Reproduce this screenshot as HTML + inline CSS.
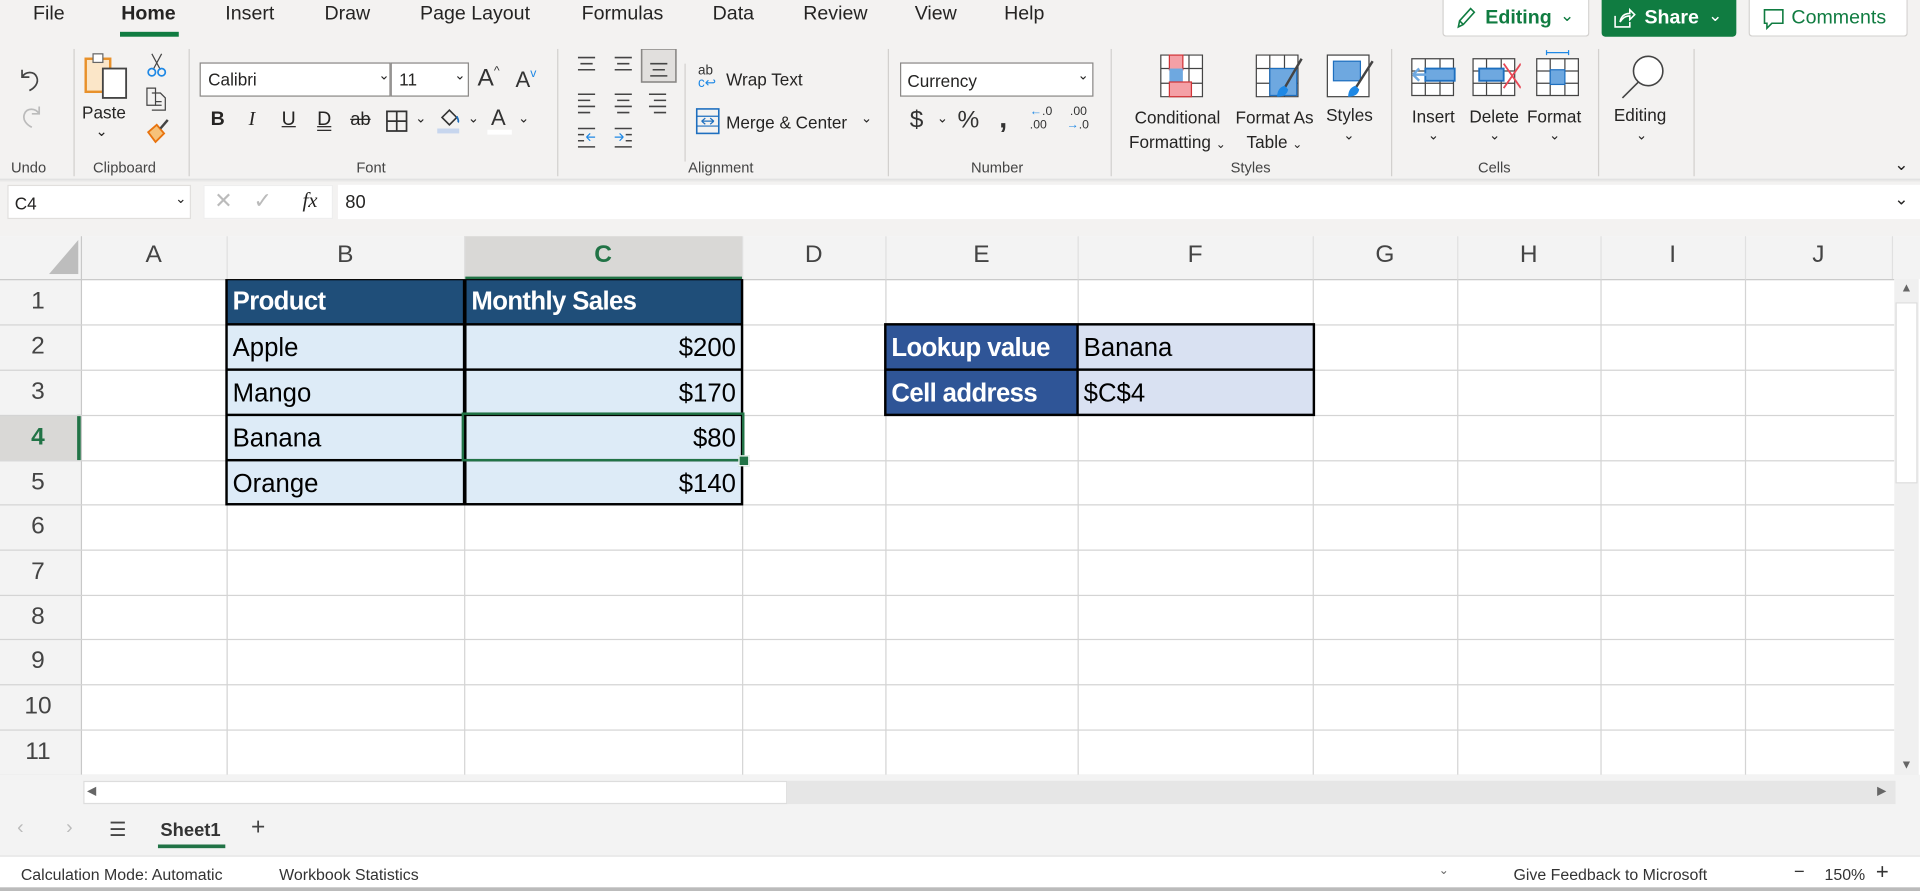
<!DOCTYPE html>
<html><head><meta charset="utf-8">
<style>
html,body{margin:0;padding:0;width:1920px;height:891px;overflow:hidden;background:#fff;}
#w{position:absolute;left:0;top:0;width:1568px;height:728px;transform:scale(1.22449,1.2239);transform-origin:0 0;font-family:"Liberation Sans",sans-serif;color:#252423;background:#f3f2f1;}
.a{position:absolute;white-space:nowrap;}
.tab{font-size:16px;top:3px;color:#252423}
.lbl{font-size:12px;top:130px;color:#444}
.sep{position:absolute;top:40px;width:1px;height:104px;background:#d2d0ce}
.rb{font-size:14px;color:#252423}
.hl{position:absolute;height:1px;background:#d4d4d4;left:66px;width:1481px}
.vl{position:absolute;width:1px;background:#d4d4d4;top:228px;height:405px}
.ch{font-size:20px;color:#444;top:197px;text-align:center}
.rh{font-size:20px;color:#444;left:0;width:62px;text-align:center}
.c{position:absolute;font-family:"Liberation Sans",sans-serif;font-size:21px;color:#000;box-sizing:border-box;padding:0 4px;line-height:37px;height:37px;white-space:nowrap}
.ic{position:absolute}
</style></head><body><div id="w">
<!-- tabs -->
<div class="a tab" style="left:27px">File</div>
<div class="a tab" style="left:99px;font-weight:bold;color:#252423">Home</div>
<div class="a" style="left:98px;top:26px;width:48px;height:4px;background:#107c41"></div>
<div class="a tab" style="left:184px">Insert</div>
<div class="a tab" style="left:265px">Draw</div>
<div class="a tab" style="left:343px">Page Layout</div>
<div class="a tab" style="left:475px">Formulas</div>
<div class="a tab" style="left:582px">Data</div>
<div class="a tab" style="left:656px">Review</div>
<div class="a tab" style="left:747px">View</div>
<div class="a tab" style="left:820px">Help</div>
<!-- right buttons -->
<div class="a" style="left:1178px;top:0;width:120px;height:30px;background:#fff;border:1px solid #d2d0ce;border-top:none;box-sizing:border-box;border-radius:0 0 3px 3px"></div>
<svg class="ic" style="left:1188px;top:5px" width="18" height="20" viewBox="0 0 18 20"><path d="M3 17 L4 12 L13 2 L16 5 L7 15 Z M4 12 L7 15" fill="none" stroke="#107c41" stroke-width="1.3"/></svg>
<div class="a" style="left:1213px;top:6px;font-size:16px;font-weight:bold;color:#107c41">Editing</div>
<div class="a" style="left:1274px;top:4px;font-size:14px;color:#107c41">⌄</div>
<div class="a" style="left:1308px;top:0;width:110px;height:30px;background:#107c41;border-radius:0 0 3px 3px"></div>
<svg class="ic" style="left:1316px;top:5px" width="20" height="20" viewBox="0 0 20 20"><path d="M3 8 V17 H15 V13 M7 13 C8 8 11 6 15 6 V3 L19 7 L15 11 V8 C11 8 9 10 7 13" fill="none" stroke="#fff" stroke-width="1.3"/></svg>
<div class="a" style="left:1343px;top:6px;font-size:16px;font-weight:bold;color:#fff">Share</div>
<div class="a" style="left:1395px;top:4px;font-size:14px;color:#fff">⌄</div>
<div class="a" style="left:1428px;top:0;width:130px;height:30px;background:#fff;border:1px solid #d2d0ce;border-top:none;box-sizing:border-box;border-radius:0 0 3px 3px"></div>
<svg class="ic" style="left:1440px;top:7px" width="18" height="18" viewBox="0 0 18 18"><path d="M1 1 H16 V12 H7 L3 16 V12 H1 Z" fill="none" stroke="#107c41" stroke-width="1.3"/></svg>
<div class="a" style="left:1463px;top:6px;font-size:16px;color:#107c41">Comments</div>
<!-- ribbon -->
<svg class="ic" style="left:14px;top:54px" width="22" height="22" viewBox="0 0 22 22"><path d="M4 3 V9 H10 M4 9 C7 4 14 4 16 9 C18 14 14 18 10 20" fill="none" stroke="#444" stroke-width="1.4"/></svg>
<svg class="ic" style="left:14px;top:84px" width="22" height="22" viewBox="0 0 22 22"><path d="M18 3 V9 H12 M18 9 C15 4 8 4 6 9 C4 14 8 18 12 20" fill="none" stroke="#bbb" stroke-width="1.4"/></svg>
<div class="a lbl" style="left:9px">Undo</div>
<div class="sep" style="left:60px"></div>
<svg class="ic" style="left:68px;top:42px" width="40" height="40" viewBox="0 0 40 40"><rect x="2" y="6" width="20" height="27" fill="#fbe6c8" stroke="#e8912b" stroke-width="2"/><rect x="8" y="2" width="8" height="7" fill="#fff" stroke="#666"/><rect x="16" y="14" width="19" height="24" fill="#fff" stroke="#444" stroke-width="1.5"/></svg>
<div class="a rb" style="left:67px;top:84px">Paste</div>
<div class="a" style="left:78px;top:100px;font-size:12px">⌄</div>
<svg class="ic" style="left:118px;top:42px" width="20" height="22" viewBox="0 0 20 22"><path d="M6 2 L13 15 M14 2 L7 15" stroke="#444" fill="none"/><circle cx="6" cy="17" r="3" fill="none" stroke="#1e88e5" stroke-width="1.4"/><circle cx="14" cy="17" r="3" fill="none" stroke="#1e88e5" stroke-width="1.4"/></svg>
<svg class="ic" style="left:118px;top:70px" width="20" height="22" viewBox="0 0 20 22"><path d="M2 2 H9 V16 H2 Z M6 6 H13 L17 10 V20 H6" fill="#f3f2f1" stroke="#444"/><path d="M9 13 H14 M9 16 H14" stroke="#444"/></svg>
<svg class="ic" style="left:118px;top:96px" width="22" height="22" viewBox="0 0 22 22"><path d="M3 12 L10 6 L16 13 L9 20 Z" fill="#f6c27a" stroke="#e8730e" stroke-width="1.5"/><path d="M13 9 L19 2" stroke="#444" stroke-width="2"/></svg>
<div class="a lbl" style="left:76px">Clipboard</div>
<div class="sep" style="left:154px"></div>
<div class="a" style="left:163px;top:51px;width:156px;height:28px;background:#fff;border:1px solid #8a8886;box-sizing:border-box"></div>
<div class="a rb" style="left:170px;top:57px">Calibri</div>
<div class="a" style="left:309px;top:55px;font-size:11px">⌄</div>
<div class="a" style="left:319px;top:51px;width:64px;height:28px;background:#fff;border:1px solid #8a8886;box-sizing:border-box"></div>
<div class="a rb" style="left:326px;top:57px">11</div>
<div class="a" style="left:371px;top:55px;font-size:11px">⌄</div>
<div class="a" style="left:390px;top:53px;font-size:20px;color:#333">A<span style="font-size:10px;vertical-align:top">^</span></div>
<div class="a" style="left:421px;top:55px;font-size:18px;color:#333">A<span style="font-size:10px;vertical-align:top;color:#1e88e5">v</span></div>
<div class="a" style="left:172px;top:89px;font-size:16px;font-weight:bold">B</div>
<div class="a" style="left:203px;top:89px;font-size:16px;font-style:italic;font-family:'Liberation Serif'">I</div>
<div class="a" style="left:230px;top:89px;font-size:16px;text-decoration:underline">U</div>
<div class="a" style="left:259px;top:89px;font-size:16px;text-decoration:underline double">D</div>
<div class="a" style="left:286px;top:89px;font-size:15px;text-decoration:line-through">ab</div>
<svg class="ic" style="left:315px;top:90px" width="18" height="18" viewBox="0 0 18 18"><path d="M1 1 H17 V17 H1 Z M9 1 V17 M1 9 H17" fill="none" stroke="#333" stroke-width="1.4"/></svg>
<div class="a" style="left:339px;top:90px;font-size:11px">⌄</div>
<svg class="ic" style="left:357px;top:86px" width="22" height="24" viewBox="0 0 22 24"><path d="M4 10 L10 4 L16 10 L10 16 Z" fill="none" stroke="#333" stroke-width="1.3"/><path d="M16 9 Q18 13 17 14" stroke="#1e6fbf" fill="none" stroke-width="1.5"/><rect x="0" y="19" width="18" height="4" fill="#c7d6ee"/></svg>
<div class="a" style="left:382px;top:90px;font-size:11px">⌄</div>
<div class="a" style="left:401px;top:86px;font-size:18px;color:#333">A</div>
<div class="a" style="left:398px;top:106px;width:20px;height:4px;background:#fff"></div>
<div class="a" style="left:423px;top:90px;font-size:11px">⌄</div>
<div class="a lbl" style="left:291px">Font</div>
<div class="sep" style="left:455px"></div>
<svg class="ic" style="left:466px;top:40px" width="90" height="86" viewBox="0 0 90 86"><g stroke="#444" stroke-width="1.3"><path d="M6 7 H20 M8 12 H18 M6 17 H20"/><path d="M36 7 H50 M38 12 H48 M36 17 H50"/><rect x="58" y="0" width="28" height="27" fill="#e1dfdd" stroke="#8a8886"/><path d="M65 12 H79 M67 17 H77 M65 22 H79"/><path d="M6 37 H20 M6 42 H16 M6 47 H20 M6 52 H16"/><path d="M36 37 H50 M38 42 H48 M36 47 H50 M38 52 H48"/><path d="M64 37 H78 M68 42 H78 M64 47 H78 M68 52 H78"/><path d="M6 65 H20 M6 70 H11 M6 75 H11 M6 80 H20"/><path d="M36 65 H50 M45 70 H50 M45 75 H50 M36 80 H50"/></g><path d="M13 72 H20 M13 72 L16 69 M13 72 L16 75" stroke="#1e88e5" fill="none"/><path d="M36 72 H43 M43 72 L40 69 M43 72 L40 75" stroke="#1e88e5" fill="none"/></svg>
<div class="sep" style="left:559px;top:52px;height:80px"></div>
<div class="a" style="left:570px;top:53px;font-size:11px;line-height:10px;color:#333">ab<br><span style="color:#1e88e5">c↩</span></div>
<div class="a rb" style="left:593px;top:57px">Wrap Text</div>
<svg class="ic" style="left:568px;top:88px" width="20" height="22" viewBox="0 0 20 22"><rect x="1" y="1" width="18" height="20" fill="none" stroke="#1e6fbf" stroke-width="1.3"/><path d="M1 7 H19 M1 15 H19 M5 11 H15 M5 11 L8 8.5 M5 11 L8 13.5 M15 11 L12 8.5 M15 11 L12 13.5" stroke="#1e6fbf" fill="none"/></svg>
<div class="a rb" style="left:593px;top:92px">Merge &amp; Center</div>
<div class="a" style="left:703px;top:90px;font-size:11px">⌄</div>
<div class="a lbl" style="left:562px">Alignment</div>
<div class="sep" style="left:725px"></div>
<div class="a" style="left:735px;top:51px;width:158px;height:28px;background:#fff;border:1px solid #8a8886;box-sizing:border-box"></div>
<div class="a rb" style="left:741px;top:58px">Currency</div>
<div class="a" style="left:880px;top:55px;font-size:11px">⌄</div>
<div class="a" style="left:743px;top:87px;font-size:20px;color:#333">$</div>
<div class="a" style="left:765px;top:90px;font-size:11px">⌄</div>
<div class="a" style="left:782px;top:87px;font-size:20px;color:#333">%</div>
<div class="a" style="left:816px;top:83px;font-size:24px;font-weight:bold;color:#333">,</div>
<div class="a" style="left:841px;top:86px;font-size:10px;line-height:11px;color:#333"><span style="color:#1e88e5">←</span>.0<br>.00</div>
<div class="a" style="left:871px;top:86px;font-size:10px;line-height:11px;color:#333">&nbsp;.00<br><span style="color:#1e88e5">→</span>.0</div>
<div class="a lbl" style="left:793px">Number</div>
<div class="sep" style="left:907px"></div>
<svg class="ic" style="left:947px;top:44px" width="36" height="36" viewBox="0 0 36 36"><path d="M1 1 H35 V35 H1 Z M12 1 V35 M24 1 V35 M1 12 H35 M1 24 H35" fill="#fff" stroke="#444"/><rect x="8" y="1" width="11" height="12" fill="#f4a0a6" stroke="#d13438"/><rect x="8" y="12" width="11" height="11" fill="#6ea8e0"/><rect x="8" y="23" width="18" height="12" fill="#f4a0a6" stroke="#d13438"/></svg>
<div class="a rb" style="left:922px;top:86px;text-align:center;line-height:20px">Conditional<br>Formatting <span style="font-size:10px">⌄</span></div>
<svg class="ic" style="left:1025px;top:44px" width="40" height="38" viewBox="0 0 40 38"><path d="M1 1 H35 V35 H1 Z M12 1 V35 M24 1 V35 M1 12 H35 M1 24 H35" fill="#fff" stroke="#444"/><rect x="12" y="12" width="22" height="22" fill="#6ea8e0" stroke="#1e6fbf"/><path d="M38 4 L24 28" stroke="#444" stroke-width="2"/><path d="M24 26 Q18 28 18 35 Q26 35 27 29 Z" fill="#1e88e5"/></svg>
<div class="a rb" style="left:1009px;top:86px;text-align:center;line-height:20px">Format As<br>Table <span style="font-size:10px">⌄</span></div>
<svg class="ic" style="left:1083px;top:44px" width="40" height="38" viewBox="0 0 40 38"><rect x="1" y="1" width="34" height="34" fill="#fff" stroke="#444"/><rect x="6" y="6" width="22" height="16" fill="#6ea8e0" stroke="#1e6fbf"/><path d="M38 6 L24 28" stroke="#444" stroke-width="2"/><path d="M24 26 Q18 28 18 35 Q26 35 27 29 Z" fill="#1e88e5"/></svg>
<div class="a rb" style="left:1083px;top:86px">Styles</div>
<div class="a" style="left:1097px;top:104px;font-size:11px">⌄</div>
<div class="a lbl" style="left:1005px">Styles</div>
<div class="sep" style="left:1136px"></div>
<svg class="ic" style="left:1152px;top:44px" width="40" height="36" viewBox="0 0 40 36"><path d="M1 4 H35 V34 H1 Z M12 4 V34 M24 4 V34 M1 14 H35 M1 24 H35" fill="#fff" stroke="#444"/><rect x="12" y="12" width="24" height="10" fill="#6ea8e0" stroke="#1e6fbf" stroke-width="1.5"/><path d="M14 17 H2 M2 17 L7 12 M2 17 L7 22" stroke="#6ea8e0" stroke-width="2" fill="none"/></svg>
<div class="a rb" style="left:1153px;top:87px">Insert</div>
<div class="a" style="left:1166px;top:104px;font-size:11px">⌄</div>
<svg class="ic" style="left:1202px;top:44px" width="40" height="36" viewBox="0 0 40 36"><path d="M1 4 H35 V34 H1 Z M12 4 V34 M24 4 V34 M1 14 H35 M1 24 H35" fill="#fff" stroke="#444"/><rect x="6" y="12" width="20" height="10" fill="#6ea8e0" stroke="#1e6fbf" stroke-width="1.5"/><path d="M26 8 L40 28 M40 8 L26 28" stroke="#e74856" stroke-width="1.5"/></svg>
<div class="a rb" style="left:1200px;top:87px">Delete</div>
<div class="a" style="left:1216px;top:104px;font-size:11px">⌄</div>
<svg class="ic" style="left:1254px;top:40px" width="36" height="40" viewBox="0 0 36 40"><path d="M9 3 H27 M9 1 V5 M27 1 V5" stroke="#1e88e5"/><path d="M1 8 H35 V38 H1 Z M12 8 V38 M24 8 V38 M1 18 H35 M1 28 H35" fill="#fff" stroke="#444"/><rect x="12" y="17" width="12" height="12" fill="#6ea8e0" stroke="#1e6fbf"/></svg>
<div class="a rb" style="left:1247px;top:87px">Format</div>
<div class="a" style="left:1265px;top:104px;font-size:11px">⌄</div>
<div class="a lbl" style="left:1207px">Cells</div>
<div class="sep" style="left:1305px"></div>
<svg class="ic" style="left:1320px;top:42px" width="42" height="40" viewBox="0 0 42 40"><circle cx="26" cy="16" r="12" fill="#fff" stroke="#444" stroke-width="1.3"/><path d="M18 25 L5 38" stroke="#444" stroke-width="1.3"/></svg>
<div class="a rb" style="left:1318px;top:86px">Editing</div>
<div class="a" style="left:1336px;top:104px;font-size:11px">⌄</div>
<div class="sep" style="left:1383px"></div>
<div class="a" style="left:1547px;top:126px;font-size:14px">⌄</div>
<!-- ribbon shadow -->
<div class="a" style="left:0;top:146px;width:1568px;height:3px;background:linear-gradient(#ddd,#f3f2f1)"></div>
<!-- formula bar -->
<div class="a" style="left:6px;top:151px;width:150px;height:28px;background:#fff;border:1px solid #e1dfdd;box-sizing:border-box"></div>
<div class="a" style="left:12px;top:158px;font-size:14px">C4</div>
<div class="a" style="left:143px;top:156px;font-size:11px">⌄</div>
<div class="a" style="left:166px;top:151px;width:106px;height:28px;background:#fff;border:1px solid #eee;box-sizing:border-box"></div>
<div class="a" style="left:175px;top:154px;font-size:18px;color:#bbb">✕</div>
<div class="a" style="left:207px;top:154px;font-size:18px;color:#bbb">✓</div>
<div class="a" style="left:247px;top:154px;font-size:17px;font-style:italic;font-family:'Liberation Serif'">fx</div>
<div class="a" style="left:276px;top:151px;width:1292px;height:28px;background:#fff"></div>
<div class="a" style="left:282px;top:157px;font-size:15px">80</div>
<div class="a" style="left:1547px;top:154px;font-size:14px">⌄</div>
<!-- grid area -->
<div class="a" style="left:0;top:193px;width:1568px;height:445px;background:#fff"></div>
<div class="a" style="left:0;top:193px;width:1568px;height:35px;background:#f3f3f3"></div>
<div class="a" style="left:0;top:228px;width:66px;height:410px;background:#f3f3f3"></div>
<div class="a" style="left:379px;top:193px;width:227px;height:35px;background:#d9d8d6"></div>
<div class="a" style="left:379px;top:226px;width:227px;height:3px;background:#217346"></div>
<div class="a" style="left:0;top:339px;width:66px;height:37px;background:#d9d8d6"></div>
<div class="a" style="left:63px;top:339px;width:3px;height:37px;background:#217346"></div>
<svg class="ic" style="left:40px;top:196px" width="24" height="28"><path d="M24 0 V28 H0 Z" fill="#bdbdbd"/></svg>
<div class="a" style="left:0;top:228px;width:1547px;height:1px;background:#c8c8c8"></div>
<div class="a" style="left:66px;top:193px;width:1px;height:440px;background:#c8c8c8"></div>
<!-- column header dividers -->
<div class="a" style="left:185px;top:193px;width:1px;height:35px;background:#e0e0e0"></div>
<div class="a" style="left:379px;top:193px;width:1px;height:35px;background:#e0e0e0"></div>
<div class="a" style="left:606px;top:193px;width:1px;height:35px;background:#e0e0e0"></div>
<div class="a" style="left:723px;top:193px;width:1px;height:35px;background:#e0e0e0"></div>
<div class="a" style="left:880px;top:193px;width:1px;height:35px;background:#e0e0e0"></div>
<div class="a" style="left:1072px;top:193px;width:1px;height:35px;background:#e0e0e0"></div>
<div class="a" style="left:1190px;top:193px;width:1px;height:35px;background:#e0e0e0"></div>
<div class="a" style="left:1307px;top:193px;width:1px;height:35px;background:#e0e0e0"></div>
<div class="a" style="left:1425px;top:193px;width:1px;height:35px;background:#e0e0e0"></div>
<div class="a" style="left:1545px;top:193px;width:1px;height:35px;background:#e0e0e0"></div>
<div class="a ch" style="left:66px;width:119px">A</div>
<div class="a ch" style="left:185px;width:194px">B</div>
<div class="a ch" style="left:379px;width:227px;color:#217346;font-weight:bold">C</div>
<div class="a ch" style="left:606px;width:117px">D</div>
<div class="a ch" style="left:723px;width:157px">E</div>
<div class="a ch" style="left:880px;width:192px">F</div>
<div class="a ch" style="left:1072px;width:118px">G</div>
<div class="a ch" style="left:1190px;width:117px">H</div>
<div class="a ch" style="left:1307px;width:118px">I</div>
<div class="a ch" style="left:1425px;width:120px">J</div>
<!-- grid lines -->
<div class="vl" style="left:185px"></div><div class="vl" style="left:379px"></div><div class="vl" style="left:606px"></div><div class="vl" style="left:723px"></div><div class="vl" style="left:880px"></div><div class="vl" style="left:1072px"></div><div class="vl" style="left:1190px"></div><div class="vl" style="left:1307px"></div><div class="vl" style="left:1425px"></div>
<div class="hl" style="top:265px;left:0;width:1547px"></div><div class="hl" style="top:302px;left:0;width:1547px"></div><div class="hl" style="top:339px;left:0;width:1547px"></div><div class="hl" style="top:376px;left:0;width:1547px"></div><div class="hl" style="top:412px;left:0;width:1547px"></div><div class="hl" style="top:449px;left:0;width:1547px"></div><div class="hl" style="top:486px;left:0;width:1547px"></div><div class="hl" style="top:522px;left:0;width:1547px"></div><div class="hl" style="top:559px;left:0;width:1547px"></div><div class="hl" style="top:596px;left:0;width:1547px"></div><div class="hl" style="top:633px;left:0;width:1547px"></div>
<div class="a rh" style="top:235px">1</div>
<div class="a rh" style="top:272px">2</div>
<div class="a rh" style="top:309px">3</div>
<div class="a rh" style="top:346px;color:#217346;font-weight:bold">4</div>
<div class="a rh" style="top:383px">5</div>
<div class="a rh" style="top:419px">6</div>
<div class="a rh" style="top:456px">7</div>
<div class="a rh" style="top:493px">8</div>
<div class="a rh" style="top:529px">9</div>
<div class="a rh" style="top:566px">10</div>
<div class="a rh" style="top:603px">11</div>
<!-- table -->
<div class="a" style="left:184px;top:228px;width:423px;height:185px;background:#000"></div>
<div class="c" style="left:186px;top:229px;width:192px;height:35px;line-height:36px;background:#1f4e79;color:#fff;font-weight:bold;letter-spacing:-0.5px">Product</div>
<div class="c" style="left:381px;top:229px;width:224px;height:35px;line-height:36px;background:#1f4e79;color:#fff;font-weight:bold;letter-spacing:-0.5px">Monthly Sales</div>
<div class="c" style="left:186px;top:266px;width:192px;height:35px;background:#ddebf7">Apple</div>
<div class="c" style="left:381px;top:266px;width:224px;height:35px;background:#ddebf7;text-align:right">$200</div>
<div class="c" style="left:186px;top:303px;width:192px;height:35px;background:#ddebf7">Mango</div>
<div class="c" style="left:381px;top:303px;width:224px;height:35px;background:#ddebf7;text-align:right">$170</div>
<div class="c" style="left:186px;top:340px;width:192px;height:35px;background:#ddebf7">Banana</div>
<div class="c" style="left:381px;top:340px;width:224px;height:35px;background:#ddebf7;text-align:right">$80</div>
<div class="c" style="left:186px;top:377px;width:192px;height:34px;background:#ddebf7">Orange</div>
<div class="c" style="left:381px;top:377px;width:224px;height:34px;background:#ddebf7;text-align:right">$140</div>
<div class="a" style="left:377px;top:337px;width:231px;height:40px;border:2px solid #217346;box-sizing:border-box"></div>
<div class="a" style="left:603px;top:372px;width:7px;height:7px;background:#217346;border:1px solid #fff"></div>
<div class="a" style="left:722px;top:264px;width:352px;height:76px;background:#000"></div>
<div class="c" style="left:724px;top:266px;width:155px;height:35px;background:#2f5597;color:#fff;font-weight:bold;letter-spacing:-0.5px">Lookup value</div>
<div class="c" style="left:881px;top:266px;width:191px;height:35px;background:#d9e1f2">Banana</div>
<div class="c" style="left:724px;top:303px;width:155px;height:35px;background:#2f5597;color:#fff;font-weight:bold;letter-spacing:-0.5px">Cell address</div>
<div class="c" style="left:881px;top:303px;width:191px;height:35px;background:#d9e1f2">$C$4</div>
<!-- vertical scrollbar -->
<div class="a" style="left:1547px;top:228px;width:20px;height:408px;background:#f0f0f0"></div>
<div class="a" style="left:1548px;top:247px;width:18px;height:148px;background:#fff;border:1px solid #ddd;box-sizing:border-box"></div>
<div class="a" style="left:1552px;top:230px;font-size:10px;color:#666">▲</div>
<div class="a" style="left:1552px;top:620px;font-size:10px;color:#666">▼</div>
<!-- horizontal scrollbar -->
<div class="a" style="left:0;top:633px;width:1568px;height:30px;background:#f3f3f3"></div>
<div class="a" style="left:68px;top:638px;width:1480px;height:19px;background:#e6e6e6"></div>
<div class="a" style="left:68px;top:638px;width:575px;height:19px;background:#fff;border:1px solid #ddd;box-sizing:border-box"></div>
<div class="a" style="left:71px;top:641px;font-size:10px;color:#666">◀</div>
<div class="a" style="left:1533px;top:641px;font-size:10px;color:#666">▶</div>
<!-- sheet tabs -->
<div class="a" style="left:0;top:663px;width:1568px;height:36px;background:#f3f3f3"></div>
<div class="a" style="left:14px;top:668px;font-size:16px;color:#bbb">‹</div>
<div class="a" style="left:54px;top:668px;font-size:16px;color:#bbb">›</div>
<div class="a" style="left:89px;top:668px;font-size:16px;color:#444">☰</div>
<div class="a" style="left:131px;top:670px;font-size:15px;font-weight:bold;color:#333">Sheet1</div>
<div class="a" style="left:129px;top:690px;width:55px;height:3px;background:#217346"></div>
<div class="a" style="left:205px;top:665px;font-size:20px;color:#444">+</div>
<div class="a" style="left:0;top:699px;width:1568px;height:1px;background:#e1e1e1"></div>
<!-- status bar -->
<div class="a" style="left:0;top:700px;width:1568px;height:25px;background:#fff"></div>
<div class="a" style="left:0;top:725px;width:1568px;height:3px;background:#bbb"></div>
<div class="a" style="left:17px;top:707px;font-size:13px;color:#333">Calculation Mode: Automatic</div>
<div class="a" style="left:228px;top:707px;font-size:13px;color:#333">Workbook Statistics</div>
<div class="a" style="left:1175px;top:706px;font-size:10px;color:#666">⌄</div>
<div class="a" style="left:1236px;top:707px;font-size:13px;color:#333">Give Feedback to Microsoft</div>
<div class="a" style="left:1465px;top:704px;font-size:15px;color:#333">−</div>
<div class="a" style="left:1490px;top:707px;font-size:13px;color:#333">150%</div>
<div class="a" style="left:1532px;top:702px;font-size:18px;color:#333">+</div>
</div></body></html>
